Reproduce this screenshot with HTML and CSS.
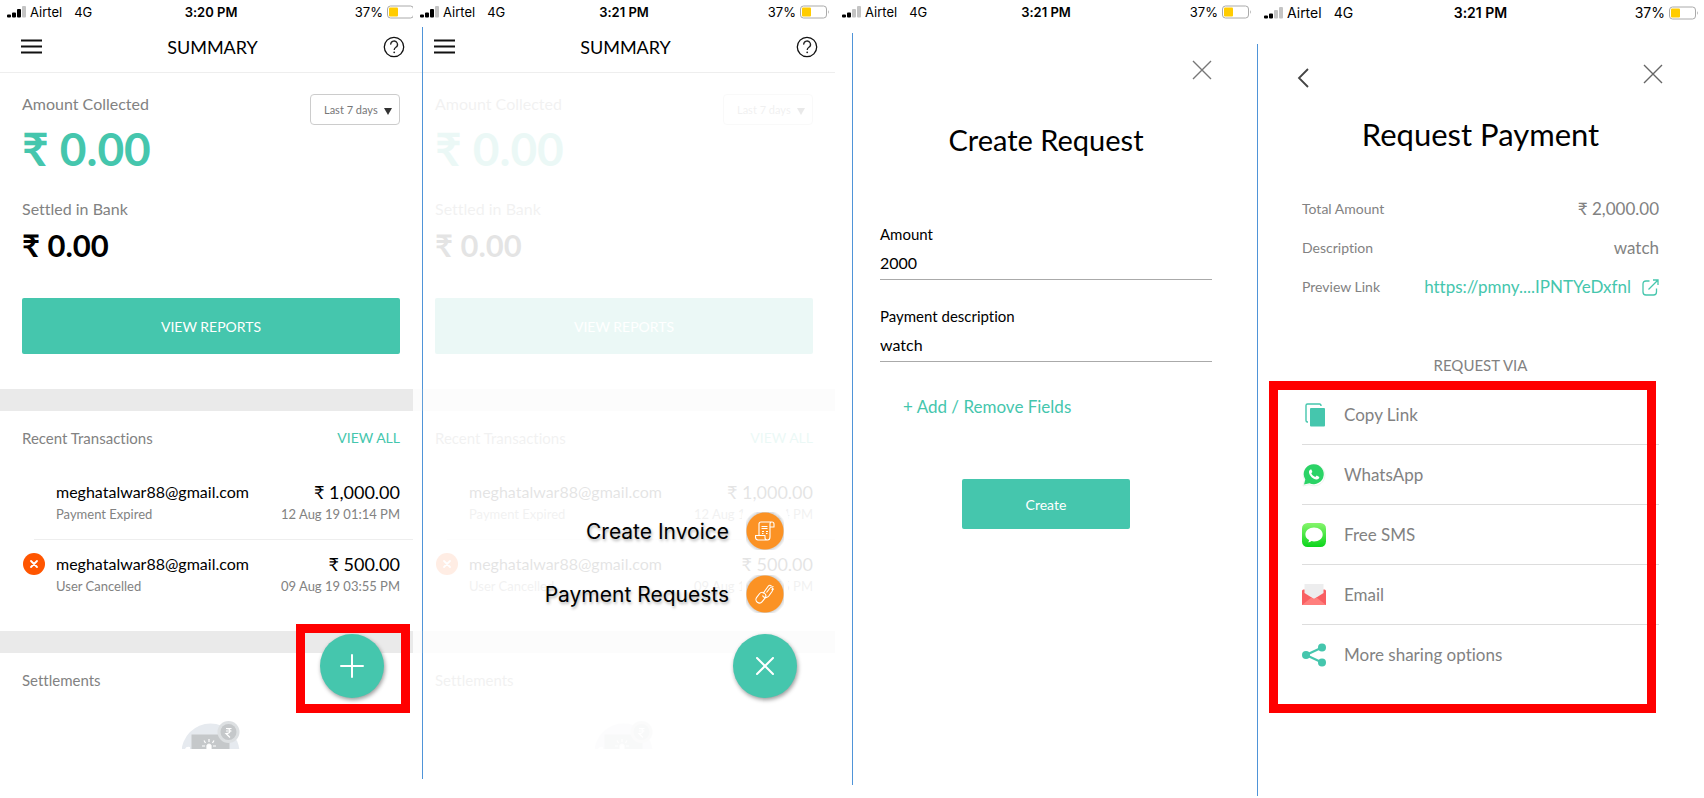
FILE: index.html
```html
<!DOCTYPE html>
<html lang="en">
<head>
    <meta charset="UTF-8">
    <meta name="viewport" content="width=device-width, initial-scale=1.0">
    <title>Payment Request Flow</title>
    <link rel="stylesheet" href="styles.css">
</head>
<body>
    <svg class="defs" aria-hidden="true">
        <symbol id="battery" viewBox="0 0 30 14">
            <rect x="0.5" y="1" width="26" height="12" rx="3" fill="#fff" stroke="#aaa"/>
            <rect x="2" y="2.5" width="9" height="9" rx="1" fill="#fc0"/>
            <path d="M28 5v4q1.500-2 0-4z" fill="#999"/>
        </symbol>
        <symbol id="signal4" viewBox="0 0 19 12">
            <path d="M0 9.500q0-1 1-1h2q1 0 1 1v1q0 1-1 1H1q-1 0-1-1zM5 7.500q0-1 1-1h2q1 0 1 1v3q0 1-1 1H6q-1 0-1-1zM10 4q0-1 1-1h2q1 0 1 1v6.500q0 1-1 1h-2q-1 0-1-1z" fill="#000"/>
            <rect x="15" y="0" width="4" height="11.500" rx="1" fill="#c4c4c4"/>
        </symbol>
        <symbol id="signal3" viewBox="0 0 19 12">
            <path d="M0 9.500q0-1 1-1h2q1 0 1 1v1q0 1-1 1H1q-1 0-1-1zM5 7.500q0-1 1-1h2q1 0 1 1v3q0 1-1 1H6q-1 0-1-1z" fill="#000"/>
            <rect x="10" y="3" width="4" height="8.500" rx="1" fill="#c4c4c4"/>
            <rect x="15" y="0" width="4" height="11.500" rx="1" fill="#c4c4c4"/>
        </symbol>
        <symbol id="menu" viewBox="0 0 21 15">
            <path d="M0 1.500h21M0 7.500h21M0 13.500h21" stroke="#111" stroke-width="2"/>
        </symbol>
        <symbol id="help" viewBox="0 0 22 22">
            <circle cx="11" cy="11" r="9.700" fill="none" stroke="#111" stroke-width="1.300"/>
            <path d="M7.700 8.600a3.400 3.400 0 1 1 5.200 2.700c-1.200.8-1.700 1.300-1.700 2.700" fill="none" stroke="#222" stroke-width="1.300"/>
            <circle cx="11.200" cy="16.300" r="0.900" fill="#222"/>
        </symbol>
        <symbol id="cross" viewBox="0 0 20 20">
            <path d="M1 1l18 18M19 1L1 19" fill="none" stroke="currentColor" stroke-width="1.400"/>
        </symbol>
        <symbol id="failed" viewBox="0 0 22 22">
            <circle cx="11" cy="11" r="11" fill="#ff5500"/>
            <path d="M8 8l6 6M14 8l-6 6" stroke="#fff" stroke-width="1.800" stroke-linecap="round"/>
        </symbol>
        <symbol id="settle" viewBox="0 0 58 28">
            <circle cx="28.500" cy="31.500" r="29" fill="#e6eaef"/>
            <path d="M9.500 28V13.500h38V28z" fill="#c5c8ca"/>
            <path d="M3 28q1-3 5-2v2z" fill="#fff"/>
            <path d="M25 28v-3.500q2-3 4 0V28zM27 18v3M22 19.500l1.500 2.500M32 19.500L30.500 22M20 25h3M31 25h3" fill="#fff" stroke="#fff" stroke-width="1.200"/>
            <circle cx="46.500" cy="11" r="11" fill="#dde0e2"/>
            <circle cx="46.500" cy="11" r="8" fill="#c5c8ca"/>
            <path d="M44 7.500h5.500M44 10h5.500M44 7.500q4 0 4 2.500t-4 2.500l4 4" fill="none" stroke="#fff" stroke-width="1.200"/>
        </symbol>
    </svg>

    <main class="board">
        <!-- Summary -->
        <section class="screen screen-first">
            <div class="status">
                <svg class="signal"><use href="#signal4"/></svg>
                <span>Airtel</span><span class="network">4G</span>
                <time>3:20 PM</time>
                <span class="level">37%</span>
                <svg class="battery"><use href="#battery"/></svg>
            </div>
            <header class="topbar">
                <button type="button" aria-label="Menu"><svg width="21" height="15"><use href="#menu"/></svg></button>
                <h1>SUMMARY</h1>
                <button type="button" aria-label="Help"><svg width="22" height="22"><use href="#help"/></svg></button>
            </header>
            <div class="summary">
                <div class="collected">
                    <div class="label">Amount Collected</div>
                    <div class="range">
                        <select aria-label="Period"><option>Last 7 days</option></select>
                        <svg viewBox="0 0 8 7"><path d="M0 0h8L4 7z" fill="#333"/></svg>
                    </div>
                </div>
                <div class="amount">₹ 0.00</div>
                <div class="label settled">Settled in Bank</div>
                <div class="amount-small">₹ 0.00</div>
                <button type="button" class="btn reports">VIEW REPORTS</button>
            </div>
            <div class="recent">
                <div class="recent-head"><h2>Recent Transactions</h2><a href="#">VIEW ALL</a></div>
                <ul class="transactions">
                    <li>
                        <div class="line"><span>meghatalwar88@gmail.com</span><b>₹ 1,000.00</b></div>
                        <div class="line sub"><span>Payment Expired</span><time>12 Aug 19 01:14 PM</time></div>
                    </li>
                    <li>
                        <svg class="state"><use href="#failed"/></svg>
                        <div class="line"><span>meghatalwar88@gmail.com</span><b>₹ 500.00</b></div>
                        <div class="line sub"><span>User Cancelled</span><time>09 Aug 19 03:55 PM</time></div>
                    </li>
                </ul>
            </div>
            <div class="settlements">
                <h2>Settlements</h2>
                <svg class="picture"><use href="#settle"/></svg>
            </div>
            <button type="button" class="fab" aria-label="Add">
                <svg width="24" height="24" viewBox="0 0 24 24"><path d="M12 1v22M1 12h22" stroke="#fff" stroke-width="2" stroke-linecap="round"/></svg>
            </button>
            <div class="mark mark-add"></div>
        </section>

        <!-- Summary with the add menu open -->
        <section class="screen screen-menu">
            <div class="status">
                <svg class="signal"><use href="#signal4"/></svg>
                <span>Airtel</span><span class="network">4G</span>
                <time>3:21 PM</time>
                <span class="level">37%</span>
                <svg class="battery"><use href="#battery"/></svg>
            </div>
            <header class="topbar">
                <button type="button" aria-label="Menu"><svg width="21" height="15"><use href="#menu"/></svg></button>
                <h1>SUMMARY</h1>
                <button type="button" aria-label="Help"><svg width="22" height="22"><use href="#help"/></svg></button>
            </header>
            <div class="faded">
                <div class="summary">
                    <div class="collected">
                        <div class="label">Amount Collected</div>
                        <div class="range">
                            <select aria-label="Period"><option>Last 7 days</option></select>
                            <svg viewBox="0 0 8 7"><path d="M0 0h8L4 7z" fill="#333"/></svg>
                        </div>
                    </div>
                    <div class="amount">₹ 0.00</div>
                    <div class="label settled">Settled in Bank</div>
                    <div class="amount-small">₹ 0.00</div>
                    <button type="button" class="btn reports">VIEW REPORTS</button>
                </div>
                <div class="recent">
                    <div class="recent-head"><h2>Recent Transactions</h2><a href="#">VIEW ALL</a></div>
                    <ul class="transactions">
                        <li>
                            <div class="line"><span>meghatalwar88@gmail.com</span><b>₹ 1,000.00</b></div>
                            <div class="line sub"><span>Payment Expired</span><time>12 Aug 19 01:14 PM</time></div>
                        </li>
                        <li>
                            <svg class="state"><use href="#failed"/></svg>
                            <div class="line"><span>meghatalwar88@gmail.com</span><b>₹ 500.00</b></div>
                            <div class="line sub"><span>User Cancelled</span><time>09 Aug 19 03:55 PM</time></div>
                        </li>
                    </ul>
                </div>
                <div class="settlements">
                    <h2>Settlements</h2>
                    <svg class="picture"><use href="#settle"/></svg>
                </div>
            </div>
            <div class="dial">
                <button type="button">
                    <span>Create Invoice</span>
                    <i><svg width="20" height="20" viewBox="0 0 20 20" fill="none" stroke="#fff" stroke-width="1.100" stroke-linejoin="round">
                        <path d="M4 14V3q0-2 2-2h11M15 5V3q0-2 2-2t2 2v3h-4zM15 6v10q0 3-2.500 3H3q-2.500 0-2.500-3v-1.500H10V17q0 2 2.500 2"/>
                        <path d="M6.500 5.500h6M6.500 7.500h6M7 10.500h2M7 12.500h1.500M11 10.500h2M11 12.500h1.500"/>
                    </svg></i>
                </button>
                <button type="button">
                    <span>Payment Requests</span>
                    <i><svg width="20" height="20" viewBox="0 0 20 20" fill="none" stroke="#fff" stroke-width="1.100">
                        <rect x="2.500" y="8" width="7" height="11.500" rx="3.500" transform="rotate(38 6 13.500)"/>
                        <path d="M7.500 11.500q1 2.500 4 2 1.500-.5 2.300-1.500l3.200-4.500q1.500-2.500 0-4M8 9.500l5-7q1.500-2 3.500-.7M15 3.500l3.500-1M16.500 5.500l2.500-.5M11.500 8.500l3.500-4.500"/>
                    </svg></i>
                </button>
            </div>
            <button type="button" class="fab" aria-label="Close menu">
                <svg width="18" height="18" viewBox="0 0 18 18"><path d="M1 1l16 16M17 1L1 17" stroke="#fff" stroke-width="2" stroke-linecap="round"/></svg>
            </button>
        </section>

        <!-- Create request -->
        <section class="screen screen-create">
            <div class="status">
                <svg class="signal"><use href="#signal3"/></svg>
                <span>Airtel</span><span class="network">4G</span>
                <time>3:21 PM</time>
                <span class="level">37%</span>
                <svg class="battery"><use href="#battery"/></svg>
            </div>
            <form class="create">
                <button type="button" class="close" aria-label="Close"><svg width="20" height="20"><use href="#cross"/></svg></button>
                <h1>Create Request</h1>
                <label for="amount">Amount</label>
                <input id="amount" type="text" value="2000">
                <label for="description">Payment description</label>
                <input id="description" type="text" value="watch">
                <a href="#" class="fields">+ Add / Remove Fields</a>
                <button type="button" class="btn submit">Create</button>
            </form>
        </section>

        <!-- Share the request -->
        <section class="screen screen-share">
            <div class="status">
                <svg class="signal"><use href="#signal3"/></svg>
                <span>Airtel</span><span class="network">4G</span>
                <time>3:21 PM</time>
                <span class="level">37%</span>
                <svg class="battery"><use href="#battery"/></svg>
            </div>
            <div class="share">
                <div class="share-nav">
                    <button type="button" aria-label="Back"><svg width="12" height="20" viewBox="0 0 12 20"><path d="M11 1L2 10l9 9" fill="none" stroke="#444" stroke-width="1.800"/></svg></button>
                    <button type="button" aria-label="Close"><svg width="20" height="20"><use href="#cross"/></svg></button>
                </div>
                <h1>Request Payment</h1>
                <dl>
                    <div><dt>Total Amount</dt><dd>₹ 2,000.00</dd></div>
                    <div><dt>Description</dt><dd>watch</dd></div>
                    <div><dt>Preview Link</dt><dd><a href="#">https://pmny....IPNTYeDxfnl
                        <svg width="17" height="17" viewBox="0 0 17 17" fill="none" stroke="#45c6ad" stroke-width="1.300"><path d="M7.500 2H4Q1 2 1 5v8q0 3 3 3h7.500q3 0 3-3V9.500M6.500 10.500l9.500-9.500M11 1h5v5"/></svg></a></dd></div>
                </dl>
                <h2>REQUEST VIA</h2>
                <ul class="options">
                    <li><a href="#">
                        <svg viewBox="0 0 24 24"><path d="M19 3V2.500Q19 1 17.500 1h-12Q4 1 4 2.500v15Q4 19 5.500 19H6" fill="none" stroke="#45c6ad" stroke-width="1.400"/><rect x="8" y="5" width="15" height="18.500" rx="1" fill="#45c6ad"/></svg>
                        Copy Link</a></li>
                    <li><a href="#">
                        <svg viewBox="0 0 24 24"><path d="M1 23l1.600-5.800A10.800 10.800 0 1 1 7 21.600z" fill="#fff" stroke="#e6eee8" stroke-width="0.700"/><path d="M2 21.500l1.300-5A10 10 0 1 1 7.500 20.200z" fill="#2bd366"/><path d="M8.500 6.500c-1 .5-1.700 1.600-1.500 3 .5 3.500 4 6.500 7.300 7 1.700.2 3-.9 3-2.500l-2.600-1.500-1.400 1.400c-1.800-.6-3.300-2-4-3.700l1.100-1.200-1-2.400z" fill="#fff"/></svg>
                        WhatsApp</a></li>
                    <li><a href="#">
                        <svg viewBox="0 0 24 24"><defs><linearGradient id="sms" x1="0" y1="0" x2="0" y2="1"><stop offset="0" stop-color="#86f56c"/><stop offset="1" stop-color="#0bd51c"/></linearGradient></defs><rect width="24" height="24" rx="5.500" fill="url(#sms)"/><path d="M12 4.500c5 0 8.700 3 8.700 6.900s-3.700 7-8.700 7q-1.300 0-2.500-.3Q7.800 19.500 6 19.300q1.100-1 1.100-2.300-3.700-2-3.700-5.600c0-3.900 3.700-6.900 8.600-6.900z" fill="#fff"/></svg>
                        Free SMS</a></li>
                    <li><a href="#">
                        <svg viewBox="0 0 24 24"><path d="M0 8q0-1.500 1.500-1.500h21Q24 6.500 24 8v14H0z" fill="#f95f62"/><path d="M2.500 1h19v9L12 16l-9.500-6z" fill="#ededee"/><path d="M0 22l9.500-7.500L12 16l2.500-1.500L24 22z" fill="#ff7f7d"/></svg>
                        Email</a></li>
                    <li><a href="#">
                        <svg viewBox="0 0 24 24"><path d="M20 4.500L4 12l16 7.500" fill="none" stroke="#45c6ad" stroke-width="2.200"/><circle cx="20" cy="4.500" r="4" fill="#45c6ad"/><circle cx="4" cy="12" r="4" fill="#45c6ad"/><circle cx="20" cy="19.500" r="4" fill="#45c6ad"/></svg>
                        More sharing options</a></li>
                </ul>
            </div>
            <div class="mark mark-share"></div>
        </section>
    </main>
</body>
</html>
```

FILE: styles.css
```css
* {
    box-sizing: border-box;
}
body {
    margin: 0;
    background-color: #fff;
    color: #000;
    font-family: Lato, "Noto Sans", sans-serif;
    font-size: 16px;
    line-height: 20px;
    font-variant-ligatures: none;
}
h1, h2, ul, dl, dd {
    margin: 0;
    padding: 0;
    font-weight: normal;
}
ul {
    list-style: none;
}
a {
    color: #45c6ad;
    text-decoration: none;
}
button {
    padding: 0;
    border: none;
    background: none;
    font-family: inherit;
    cursor: pointer;
}
svg {
    display: block;
    flex: none;
}
.defs {
    position: absolute;
    width: 0;
    height: 0;
}
.board {
    display: grid;
    grid-template-columns: 413fr 422fr 422fr 447fr;
    min-height: 100vh;
}
.screen {
    position: relative;
    background-color: #fff;
}
/* the second screen lies over the edge of the first */
.screen-first {
    margin-right: -9px;
}
.screen-menu::before,
.screen-create::before,
.screen-share::before {
    content: '';
    position: absolute;
    top: 27px;
    left: 9px;
    width: 1px;
    height: 752px;
    background-color: #4f94d8;
}
.screen-create::before {
    top: 33px;
    left: 17px;
}
.screen-share::before {
    top: 44px;
    left: 0;
}

/* status bar */
.status {
    position: relative;
    display: flex;
    align-items: center;
    height: 23px;
    padding: 0 5px 0 7px;
    font-family: Inter, "Liberation Sans", sans-serif;
    font-size: 13px;
}
.signal {
    width: 19px;
    height: 12px;
    margin-right: 4px;
}
.battery {
    width: 30px;
    height: 14px;
    margin-left: 4px;
}
.network {
    margin-left: 12px;
}
.status time {
    position: absolute;
    left: 0;
    right: 0;
    text-align: center;
    font-weight: 600;
}
.level {
    margin-left: auto;
}
.screen-share .status {
    height: 25px;
    font-size: 14px;
}

/* summary */
.topbar {
    display: flex;
    align-items: center;
    justify-content: space-between;
    height: 50px;
    padding: 0 17px 2px 21px;
    border-bottom: 1px solid #eee;
}
.topbar h1 {
    font-size: 18px;
}
.summary {
    padding: 21px 22px 35px;
}
.collected {
    display: flex;
    justify-content: space-between;
    height: 20px;
}
.label,
.recent h2,
.settlements h2 {
    color: #828282;
}
.range {
    position: relative;
}
.range select {
    width: 90px;
    height: 31px;
    padding: 0 0 0 13px;
    border: 1px solid #ccc;
    border-radius: 4px;
    background-color: #fff;
    color: #777;
    font-family: inherit;
    font-size: 11px;
    appearance: none;
}
.range svg {
    position: absolute;
    top: 14px;
    right: 8px;
    width: 8px;
    height: 7px;
    pointer-events: none;
}
.amount {
    margin-top: 11px;
    color: #45c6ad;
    font-size: 46px;
    font-weight: bold;
    line-height: 48px;
}
.settled {
    margin-top: 26px;
}
.amount-small {
    margin-top: 10px;
    font-size: 31px;
    font-weight: bold;
    line-height: 32px;
}
.btn {
    display: block;
    border-radius: 2px;
    background-color: #45c6ad;
    color: #fff;
    font-size: 14px;
}
.reports {
    width: 100%;
    height: 56px;
    margin-top: 37px;
}
.recent {
    padding: 17px 0 20px;
    border-top: 22px solid #eaeaea;
}
.recent-head {
    display: flex;
    justify-content: space-between;
    padding: 0 22px;
    margin-bottom: 20px;
    font-size: 14px;
}
.recent h2,
.settlements h2 {
    font-size: 15px;
}
.transactions li {
    position: relative;
    margin-left: 34px;
    padding: 12px 22px 15px 22px;
}
.transactions li + li {
    border-top: 1px solid #eee;
}
.line {
    display: flex;
    justify-content: space-between;
    line-height: 24px;
}
.line b {
    font-size: 18px;
    font-weight: normal;
}
.sub {
    color: #828282;
    font-size: 13px;
    line-height: 20px;
}
.state {
    position: absolute;
    top: 13px;
    left: -11px;
    width: 22px;
    height: 22px;
}
.settlements {
    padding: 17px 22px 0;
    border-top: 22px solid #eaeaea;
}
.picture {
    width: 58px;
    height: 28px;
    margin: 31px auto 0;
}
.faded {
    opacity: 0.1;
}
.fab {
    position: absolute;
    top: 634px;
    right: 38px;
    display: flex;
    align-items: center;
    justify-content: center;
    width: 64px;
    height: 64px;
    border-radius: 50%;
    background-color: #45c6ad;
    box-shadow: 1px 2px 4px rgba(0, 0, 0, 0.4);
}
.dial {
    position: absolute;
    top: 508px;
    right: 47px;
}
.dial button {
    display: flex;
    align-items: center;
    justify-content: flex-end;
    width: 100%;
    margin-bottom: 17px;
    gap: 13px;
    font-family: Inter, "Liberation Sans", sans-serif;
    font-size: 21px;
    text-shadow: 1px 2px 3px rgba(0, 0, 0, 0.3);
}
.dial i {
    display: flex;
    align-items: center;
    justify-content: center;
    width: 46px;
    height: 46px;
    border: 4px solid #fff;
    border-radius: 8px;
    background: radial-gradient(circle, #fb9224 18px, rgba(0, 0, 0, 0.15) 19px, #fff 22px);
}

/* create request */
.create {
    display: flex;
    flex-direction: column;
    padding: 37px 45px 0;
}
.close {
    align-self: flex-end;
    color: #777;
}
.create h1,
.share h1 {
    font-size: 29px;
    line-height: 40px;
    text-align: center;
}
.create h1 {
    margin: 40px 0 64px;
}
.create label {
    font-size: 15px;
}
.create input {
    width: 100%;
    height: 36px;
    margin-bottom: 26px;
    padding: 2px 0 0;
    border: none;
    border-bottom: 1px solid #aaa;
    border-radius: 0;
    background: none;
    color: #000;
    font-family: inherit;
    font-size: 16px;
}
.fields {
    margin: 9px 0 0 23px;
    font-size: 17px;
}
.submit {
    width: 168px;
    height: 50px;
    margin: 62px auto 0;
}

/* share */
.share {
    padding: 39px 45px 0;
}
.share-nav {
    display: flex;
    justify-content: space-between;
    align-items: flex-end;
    height: 24px;
    margin: 0 -4px 0 -5px;
}
.share-nav button:last-child {
    align-self: flex-start;
    color: #666;
}
.share h1 {
    margin: 26px 0 45px;
    font-size: 31px;
}
.share dl > div {
    display: flex;
    justify-content: space-between;
    height: 39px;
    color: #828282;
}
.share dt {
    font-size: 14px;
}
.share dd {
    font-size: 17px;
}
.share dd a {
    display: flex;
    align-items: center;
    gap: 11px;
}
.share h2 {
    margin-top: 39px;
    color: #828282;
    font-size: 15px;
    text-align: center;
}
.options {
    margin-top: 10px;
}
.options a {
    display: flex;
    align-items: center;
    gap: 18px;
    height: 59px;
    color: #828282;
    font-size: 17px;
}
.options svg {
    width: 24px;
    height: 24px;
}
.options li + li {
    border-top: 1px solid #ddd;
}

/* red highlight frames */
.mark {
    position: absolute;
    border: 9px solid #f00;
    pointer-events: none;
}
.mark-add {
    top: 624px;
    right: 12px;
    width: 114px;
    height: 89px;
}
.mark-share {
    top: 381px;
    left: 12px;
    right: 48px;
    height: 332px;
}
```
